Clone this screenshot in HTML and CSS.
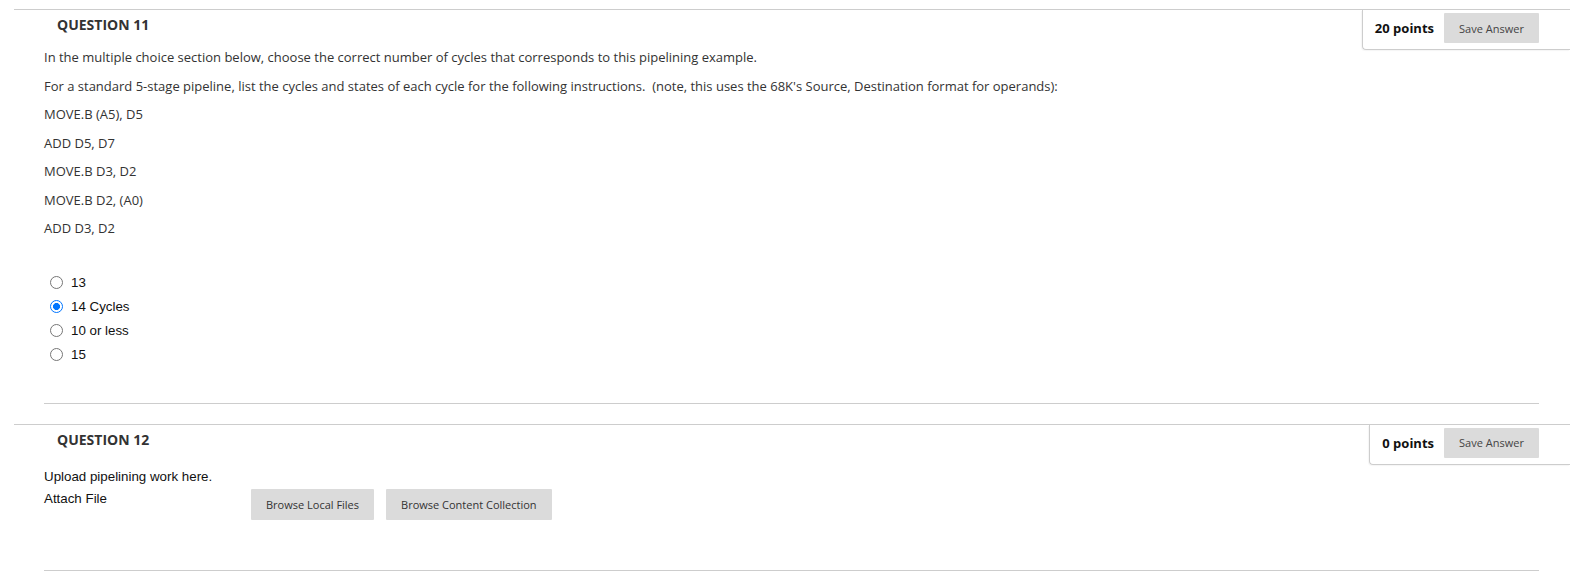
FILE: index.html
```html
<!DOCTYPE html>
<html>
<head>
<meta charset="utf-8">
<link rel="stylesheet" href="styles.css">
</head>
<body>
<div class="page">
  <section class="question">
    <div class="points-box">
      <span class="points">20 points</span>
      <button class="btn">Save Answer</button>
    </div>
    <h3 class="q-title">QUESTION 11</h3>
    <div class="q-body">
      <p>In the multiple choice section below, choose the correct number of cycles that corresponds to this pipelining example.</p>
      <p>For a standard 5-stage pipeline, list the cycles and states of each cycle for the following instructions.&nbsp; (note, this uses the 68K's Source, Destination format for operands):</p>
      <p>MOVE.B (A5), D5</p>
      <p>ADD D5, D7</p>
      <p>MOVE.B D3, D2</p>
      <p>MOVE.B D2, (A0)</p>
      <p>ADD D3, D2</p>
      <ul class="choices">
        <li><input type="radio" name="q11" id="c1"><label for="c1">13</label></li>
        <li><input type="radio" name="q11" id="c2" checked><label for="c2">14 Cycles</label></li>
        <li><input type="radio" name="q11" id="c3"><label for="c3">10 or less</label></li>
        <li><input type="radio" name="q11" id="c4"><label for="c4">15</label></li>
      </ul>
    </div>
    <hr class="sep sep-q11">
  </section>

  <section class="question q12">
    <div class="points-box">
      <span class="points">0 points</span>
      <button class="btn">Save Answer</button>
    </div>
    <h3 class="q-title">QUESTION 12</h3>
    <div class="q-body">
      <div class="upload-text">Upload pipelining work here.</div>
      <div class="attach-row">
        <div class="attach-label">Attach File</div>
        <div class="attach-buttons">
          <button class="btn btn-browse">Browse Local Files</button>
          <button class="btn btn-browse">Browse Content Collection</button>
        </div>
      </div>
    </div>
    <hr class="sep sep-q12">
  </section>
</div>
</body>
</html>
```

FILE: styles.css
```css
html, body {
  margin: 0;
  padding: 0;
  background: #fff;
}

body {
  font-family: "Open Sans", "Liberation Sans", Arial, sans-serif;
  color: #333;
}

.page {
  padding-top: 9px;
  margin: 0 9px 0 14px;
}

.question {
  border-top: 1px solid #cdcdcd;
}

.q12 {
  margin-top: 20px;
}

.points-box {
  float: right;
  display: flex;
  align-items: center;
  padding: 3px 31px 6px 12px;
  border-left: 1px solid #cdcdcd;
  border-bottom: 1px solid #cdcdcd;
  border-bottom-left-radius: 4px;
  box-shadow: -1px 1px 1px rgba(0, 0, 0, 0.04);
}

.points {
  font-size: 13px;
  font-weight: 700;
  color: #111;
  margin-right: 10px;
}

.btn {
  font-family: "Open Sans", "Liberation Sans", Arial, sans-serif;
  font-size: 11px;
  color: #444;
  background: #dbdbdb;
  border: none;
  border-radius: 1px;
  height: 30px;
  width: 95px;
  padding: 0;
  cursor: pointer;
}

.q-title {
  margin: 0 0 12px 43px;
  padding-top: 5px;
  font-size: 14px;
  line-height: 20px;
  font-weight: 700;
  color: #333;
}

.q-body {
  padding-left: 30px;
}

.q-body p {
  margin: 0 0 10px 0;
  font-size: 13px;
  line-height: 18.5px;
  color: #333;
}

.q-body p:first-child {
  padding-top: 1px;
}

.choices {
  list-style: none;
  margin: 0;
  padding: 23px 0 0 6px;
  font-family: "Liberation Sans", Arial, sans-serif;
  font-size: 13.33px;
  color: #111;
}

.choices li {
  display: flex;
  align-items: center;
  height: 24px;
}

.choices input {
  appearance: none;
  -webkit-appearance: none;
  box-sizing: border-box;
  margin: 0 8px 0 0;
  width: 13px;
  height: 13px;
  border: 1px solid #767676;
  border-radius: 50%;
  background: #fff;
}

.choices input:checked {
  border: 1.5px solid #0075ff;
  background: radial-gradient(circle, #0075ff 0 3.2px, #fff 3.8px);
}

.sep {
  border: none;
  border-top: 1px solid #cdcdcd;
  margin: 0 31px 0 30px;
  height: 0;
}

.sep-q11 {
  margin-top: 36px;
}

.q12 .q-title {
  margin-bottom: 16px;
}

.upload-text,
.attach-label {
  font-family: "Liberation Sans", Arial, sans-serif;
  font-size: 13.33px;
  line-height: 22px;
  color: #111;
}

.attach-row {
  display: flex;
  align-items: flex-start;
}

.attach-label {
  width: 207px;
  flex: none;
}

.attach-buttons {
  display: flex;
  gap: 12px;
  margin-top: 1px;
}

.btn-browse {
  width: auto;
  height: 31px;
  padding: 0 15px;
  color: #333;
}

.sep-q12 {
  margin-top: 50px;
}
```
